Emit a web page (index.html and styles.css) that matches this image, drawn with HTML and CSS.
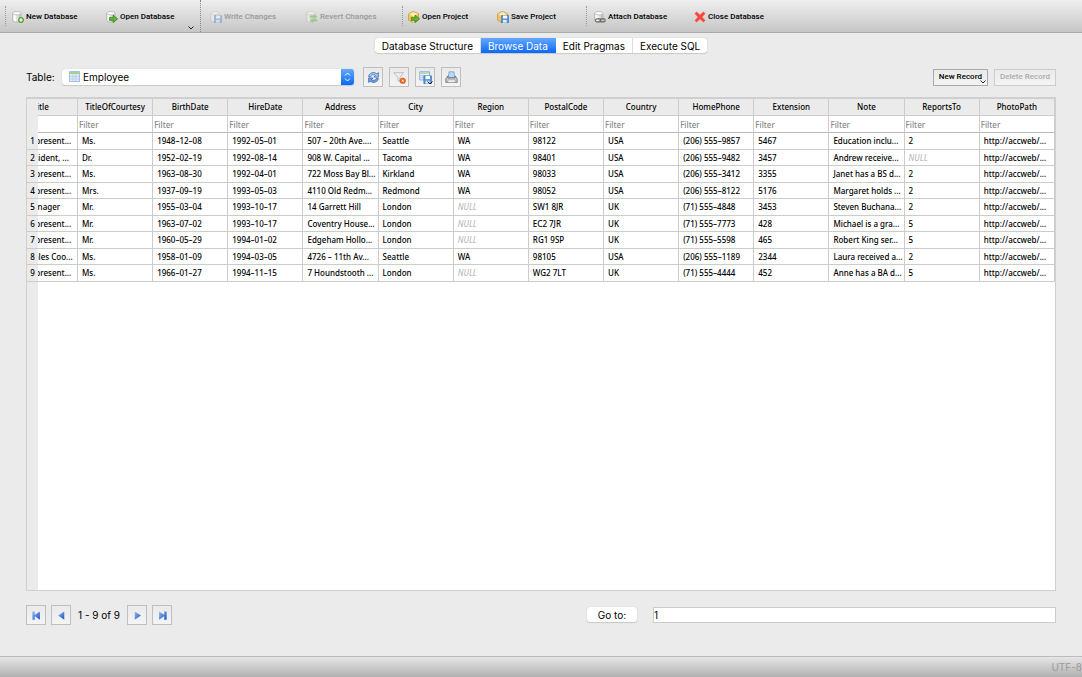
FILE: index.html
```html
<!doctype html>
<html lang="en">
  <head>
    <meta charset="utf-8">
    <title>Database Browser</title>
    <link rel="stylesheet" href="styles.css">
  </head>
  <body>
    <svg class="defs" aria-hidden="true">
      <defs>
        <linearGradient id="g-blue" x2="1" y2="1"><stop offset="0" stop-color="#8fc0f5"/><stop offset="1" stop-color="#1c50c4"/></linearGradient>
        <symbol id="cyl" viewBox="0 0 16 16">
          <path d="M1 3v9.500c0 3 11 3 11 0V3z" fill="#e2e4e0" stroke="#a2a49f" stroke-width=".9"/>
          <path d="M2 5v7.500c1 1 2 1.300 3 1.500V5z" fill="#fff"/>
          <path d="M9 5v8.800l2.500-1.300V4z" fill="#bcbeb8"/>
          <ellipse cx="6.500" cy="3" rx="5.500" ry="2.300" fill="#fcfcfc" stroke="#a2a49f" stroke-width=".8"/>
        </symbol>
        <symbol id="arrow" viewBox="0 0 16 16">
          <path d="M4.500 8.500h5V5.500l6 5-6 5v-3h-5z" fill="#5fb336" stroke="#2f7a16" stroke-width=".9"/>
        </symbol>
        <symbol id="disk" viewBox="0 0 16 16">
          <path d="M6 6h9.500v9.500H6z" fill="#5a93dc" stroke="#3268b4" stroke-width=".8"/>
          <path d="M8 6h5.500v4H8z" fill="#fff"/><path d="M8 12h5v3.500H8z" fill="#e4edf8"/>
        </symbol>
        <symbol id="cube" viewBox="0 0 16 16">
          <path d="M.5 4l6.500-3.500L14 3.500v8L7 15.500l-6.500-3.500z" fill="#f4c558" stroke="#bf8f22" stroke-width=".9"/>
          <path d="M1.500 4.300L7 7l6-3.200L7 1.300z" fill="#fdeebb"/><path d="M7 7v8" stroke="#fff1c4" stroke-width="1.200"/>
        </symbol>
      </defs>
    </svg>

    <header class="toolbar">
      <div class="group group-db grip">
        <button><svg viewBox="0 0 16 16"><use href="#cyl"/><circle cx="12" cy="12" r="3.500" fill="#6fb648" stroke="#3f8420" stroke-width=".8"/><path d="M12 9.800v4.400M9.800 12h4.400" stroke="#fff" stroke-width="1.500"/></svg>New Database</button>
        <button class="has-menu"><svg viewBox="0 0 16 16"><use href="#cyl"/><use href="#arrow"/></svg>Open Database<svg class="chevron" viewBox="0 0 6 4"><path d="M.5 .5L3 3 5.500 .5"/></svg></button>
      </div>
      <div class="group group-changes">
        <button disabled><svg viewBox="0 0 16 16"><use href="#cyl"/><use href="#disk"/></svg>Write Changes</button>
        <button disabled><svg viewBox="0 0 16 16"><use href="#cyl"/><path d="M5 6h6V4l4 3.500L11 11V9H5zM15 11H9V9.500L5 12.500 9 16v-2h6z" fill="#5fb336"/></svg>Revert Changes</button>
      </div>
      <div class="group group-project grip">
        <button><svg viewBox="0 0 16 16"><use href="#cube"/><use href="#arrow"/></svg>Open Project</button>
        <button><svg viewBox="0 0 16 16"><use href="#cube"/><use href="#disk"/></svg>Save Project</button>
      </div>
      <div class="group group-attach grip">
        <button><svg viewBox="0 0 16 16"><use href="#cyl"/><g fill="none" stroke="#666" stroke-width="1.400"><rect x="2" y="10.500" width="7" height="4" rx="2"/><rect x="8" y="10.500" width="7" height="4" rx="2"/></g></svg>Attach Database</button>
        <button><svg viewBox="0 0 16 16"><path d="M3.500 1L8 5l4.500-4L15 3.500 11 8l4 4.500-2.500 2.500L8 11l-4.500 4L1 12.500 5 8 1 3.500z" fill="#f4473f" stroke="#f98780" stroke-width=".7"/></svg>Close Database</button>
      </div>
    </header>

    <main>
      <nav class="tabs">
        <button>Database Structure</button>
        <button class="active">Browse Data</button>
        <button>Edit Pragmas</button>
        <button>Execute SQL</button>
      </nav>

      <div class="controls">
        <label for="table">Table:</label>
        <div class="picker">
          <svg class="picker-icon" viewBox="0 0 11 11"><path d="M.5 .5h10v10H.5z" fill="#dfebfa" stroke="#a3c0e6"/><path d="M1 1h9v2H1z" fill="#a9d18f"/><path d="M1 5.500h9M1 8h9M4 3v7M7 3v7" stroke="#b4cdec" stroke-width=".8"/></svg>
          <select id="table"><option>Employee</option></select>
          <svg class="picker-cap" viewBox="0 0 13 16"><path d="M4 6.500L6.500 4 9 6.500M4 9.500L6.500 12 9 9.500"/></svg>
        </div>
        <div class="icons">
          <button class="icon" aria-label="Refresh"><svg viewBox="0 0 16 16"><path d="M2 7c0-4 6-7 10-3.500L14 2v5.500H8.500L10.300 5.500C8 3.500 5 5 4.500 7z" fill="#a8caf0" stroke="#2f62ad" stroke-width=".9"/><path d="M14 9c0 4-6 7-10 3.500L2 14V8.500h5.500L5.700 10.500C8 12.500 11 11 11.500 9z" fill="#6f9fdc" stroke="#2f62ad" stroke-width=".9"/></svg></button>
          <button class="icon" aria-label="Clear filters"><svg viewBox="0 0 16 16"><path d="M1 2h12L8.500 8v5.500L6 12V8z" fill="#ececec" stroke="#aaa" stroke-width=".8"/><circle cx="12" cy="12" r="3.500" fill="#ef6a24" stroke="#c74a0c" stroke-width=".6"/><path d="M10.800 10.800l2.400 2.400m0-2.400l-2.400 2.400" stroke="#fff"/></svg></button>
          <button class="icon has-menu" aria-label="Save table"><svg viewBox="0 0 16 16"><path d="M1 1h12v10H1z" fill="#edf4fc" stroke="#6d9bd6"/><path d="M1.500 1.500h11v2h-11z" fill="#b6d59d"/><path d="M1.500 5.500h11M1.500 8h11M5 4v7" stroke="#9fc0e8" stroke-width=".9"/><use href="#disk"/></svg><svg class="chevron" viewBox="0 0 6 4"><path d="M.5 .5L3 3 5.500 .5"/></svg></button>
          <button class="icon" aria-label="Print"><svg viewBox="0 0 16 16"><path d="M4 8L5 1h6l1 7z" fill="#b9d8f7" stroke="#6796cc" stroke-width=".9"/><path d="M3.500 6L1 9.500V14h14V9.500L12.500 6v2.500h-9z" fill="#ccc" stroke="#666" stroke-width=".9"/><path d="M3.500 11h9v3h-9z" fill="#f7f7f7" stroke="#888" stroke-width=".6"/></svg></button>
        </div>
        <div class="record-buttons">
          <button class="has-menu">New Record<svg class="chevron" viewBox="0 0 6 4"><path d="M.5 .5L3 3 5.500 .5"/></svg></button>
          <button disabled>Delete Record</button>
        </div>
      </div>

      <div class="grid">
        <table>
          <colgroup><col class="col-num"><col class="col-cut"><col span="13"></colgroup>
          <thead></thead>
          <tbody></tbody>
        </table>
      </div>

      <div class="pager">
        <button class="icon" aria-label="First"><svg viewBox="0 0 16 16"><path d="M2 2h3.500v5L13 2v12L5.500 9v5H2z" fill="url(#g-blue)"/></svg></button>
        <button class="icon" aria-label="Previous"><svg viewBox="0 0 16 16"><path d="M12 2v12L3 8z" fill="url(#g-blue)"/></svg></button>
        <span class="range">1 - 9 of 9</span>
        <button class="icon" aria-label="Next"><svg viewBox="0 0 16 16"><path d="M4 2v12l9-6z" fill="url(#g-blue)"/></svg></button>
        <button class="icon" aria-label="Last"><svg viewBox="0 0 16 16"><path d="M14 2h-3.500v5L3 2v12l7.500-5v5H14z" fill="url(#g-blue)"/></svg></button>
        <div class="goto">
          <button>Go to:</button>
          <input type="text" value="1" aria-label="Go to record">
        </div>
      </div>
    </main>

    <footer class="statusbar">UTF-8</footer>

    <script>
      const columns = ['Title', 'TitleOfCourtesy', 'BirthDate', 'HireDate', 'Address', 'City', 'Region', 'PostalCode',
        'Country', 'HomePhone', 'Extension', 'Note', 'ReportsTo', 'PhotoPath'];
      const url = 'http://accweb/...';
      const rows = [
        ['Sales Represent...', 'Ms.', '1948-12-08', '1992-05-01', '507 - 20th Ave....', 'Seattle', 'WA', '98122', 'USA', '(206) 555-9857', '5467', 'Education inclu...', '2', url],
        ['Vice President, ...', 'Dr.', '1952-02-19', '1992-08-14', '908 W. Capital ...', 'Tacoma', 'WA', '98401', 'USA', '(206) 555-9482', '3457', 'Andrew receive...', null, url],
        ['Sales Represent...', 'Ms.', '1963-08-30', '1992-04-01', '722 Moss Bay Bl...', 'Kirkland', 'WA', '98033', 'USA', '(206) 555-3412', '3355', 'Janet has a BS d...', '2', url],
        ['Sales Represent...', 'Mrs.', '1937-09-19', '1993-05-03', '4110 Old Redm...', 'Redmond', 'WA', '98052', 'USA', '(206) 555-8122', '5176', 'Margaret holds ...', '2', url],
        ['Sales Manager', 'Mr.', '1955-03-04', '1993-10-17', '14 Garrett Hill', 'London', null, 'SW1 8JR', 'UK', '(71) 555-4848', '3453', 'Steven Buchana...', '2', url],
        ['Sales Represent...', 'Mr.', '1963-07-02', '1993-10-17', 'Coventry House...', 'London', null, 'EC2 7JR', 'UK', '(71) 555-7773', '428', 'Michael is a gra...', '5', url],
        ['Sales Represent...', 'Mr.', '1960-05-29', '1994-01-02', 'Edgeham Hollo...', 'London', null, 'RG1 9SP', 'UK', '(71) 555-5598', '465', 'Robert King ser...', '5', url],
        ['Inside Sales Coo...', 'Ms.', '1958-01-09', '1994-03-05', '4726 - 11th Av...', 'Seattle', 'WA', '98105', 'USA', '(206) 555-1189', '2344', 'Laura received a...', '2', url],
        ['Sales Represent...', 'Ms.', '1966-01-27', '1994-11-15', '7 Houndstooth ...', 'London', null, 'WG2 7LT', 'UK', '(71) 555-4444', '452', 'Anne has a BA d...', '5', url]
      ];

      const cell = (value) => {
        if (value === null) return '<td class="null">NULL</td>';
        return `<td><div>${value.replace(/(\d) ?- ?(?=\d)/g, (m) => m.replace('-', '\u2013'))}</div></td>`;
      };

      document.querySelector('thead').innerHTML =
        `<tr><th></th>${columns.map((c) => `<th scope="col"><div>${c}</div></th>`).join('')}</tr>` +
        `<tr class="filters"><th></th>${columns.map((c) => `<td><input placeholder="Filter" aria-label="Filter ${c}"></td>`).join('')}</tr>`;
      document.querySelector('tbody').innerHTML =
        rows.map((r, i) => `<tr><th scope="row">${i + 1}</th>${r.map(cell).join('')}</tr>`).join('');
    </script>
  </body>
</html>
```
FILE: styles.css
```css
* { box-sizing: border-box; }
body { margin: 0; min-height: 100vh; display: flex; flex-direction: column; background: #ebebeb; color: #000; font: 10px/12px Inter, "Liberation Sans", sans-serif; }
button, input, select { font: inherit; color: inherit; margin: 0; padding: 0; border: 0; border-radius: 0; outline: none; }
button { background: none; white-space: nowrap; }
svg { flex: none; display: block; }
.defs { position: absolute; width: 0; height: 0; }
.has-menu { position: relative; }
.chevron { position: absolute; right: 1px; bottom: 1px; width: 6px; height: 4px; fill: none; stroke: #222; }

.toolbar { display: flex; height: 33px; background: linear-gradient(#efefef, #c6c6c6); border-bottom: 1px solid #aaa; font: 500 8px/10px Roboto, sans-serif; }
.group { display: flex; position: relative; }
.group button { display: flex; align-items: center; gap: 2px; width: 94px; padding-top: 2px; }
.group button > svg:first-child { width: 12px; height: 12px; }
.group button:disabled { color: #999; }
.group button:disabled svg { opacity: 0.45; }
.group .chevron { right: 6px; bottom: 2px; }
.grip::before { content: ""; position: absolute; left: 0; top: 6px; height: 20px; border-left: 1px dotted #999; }
.group-db { margin-left: 5px; padding-left: 7px; }
.group-changes { padding-left: 9px; border-left: 1px dotted #888; }
.group-changes button { width: 96px; }
.group-project { padding-left: 6px; }
.group-project button { width: 89px; }
.group-attach { padding-left: 8px; }
.group-attach button { width: 100px; }

main { flex: 1; display: flex; flex-direction: column; padding: 5px 26px 31px; }

.tabs { display: flex; align-self: center; height: 15px; background: #fff; border-radius: 3px; box-shadow: 0 0 1px #aaa, 0 1px 1px #ccc; }
.tabs button { padding: 0 7px; border-right: 1px solid #ddd; }
.tabs button:last-child { border-right: 0; }
.tabs .active { background: linear-gradient(#66a9fb, #0a68fb); color: #fff; border-color: transparent; }

.controls { display: flex; align-items: center; margin-top: 14px; height: 20px; }
.controls label { width: 36px; }
.picker { position: relative; flex: 0 1 292px; height: 16px; }
.picker select { appearance: none; width: 100%; height: 16px; padding-left: 21px; background: #fff; border-radius: 3px; box-shadow: 0 0 1px #aaa, 0 1px 1px #ccc; }
.picker-icon { position: absolute; left: 7px; top: 2px; width: 11px; height: 11px; }
.picker-cap { position: absolute; right: 0; top: 0; width: 13px; height: 16px; background: linear-gradient(#66a9fb, #0a68fb); border-radius: 0 3px 3px 0; fill: none; stroke: #fff; pointer-events: none; }
.icons { display: flex; gap: 6px; margin-left: 9px; }
.icon { display: flex; align-items: center; justify-content: center; width: 20px; height: 20px; border: 1px solid #bfbfbf; background: linear-gradient(#eaeaea, #f4f4f4); }
.icon > svg:first-child { width: 13px; height: 13px; }
.record-buttons { display: flex; gap: 6px; margin-left: auto; font: 500 8px/10px Roboto, sans-serif; }
.record-buttons button { height: 17px; padding: 0 5px; border: 1px solid #aaa; background: linear-gradient(#eaeaea, #f4f4f4); }
.record-buttons button:disabled { color: #aaa; border-color: #ccc; }

/* record grid */
.grid { flex: 1; margin-top: 10px; border: 1px solid #cfcfcf; border-top-width: 2px; background: linear-gradient(90deg, #ebebeb 11px, #fff 11px); overflow: hidden; font: 500 8px/10px "Noto Sans", sans-serif; }
.grid table { width: 100%; table-layout: fixed; border-collapse: separate; border-spacing: 0; }
.col-num { width: 11px; }
.col-cut { width: 40px; }
.grid th, .grid td { height: 17px; padding: 0; border-right: 1px solid #ccc; border-bottom: 1px solid #ccc; overflow: hidden; white-space: nowrap; text-align: left; font-weight: inherit; }
.grid tbody tr:nth-child(even) > * { height: 16px; }
.grid td { padding-left: 4px; }
.grid thead th { background: #ebebeb; text-align: center; }
.grid thead th:first-child { border-bottom-color: transparent; border-right: 0; }
.grid tbody th { background: #ebebeb; text-align: center; border-right: 0; }
.grid .filters > * { padding: 0; height: 17px; border-bottom-color: #bbb; }
.grid .filters input { display: block; width: 100%; height: 15px; padding-left: 1px; background: #fff; }
.grid .filters input::placeholder { color: #888; opacity: 1; }
.grid td.null { color: #bbb; font-style: italic; }
/* first data column is scrolled partly under the row numbers */
.grid tr > :nth-child(2) > * { width: 75px; margin-left: -35px; }
.grid td:nth-child(2) { padding-left: 0; }
.grid td:nth-child(2) div { padding-left: 1px; }

.pager { display: flex; align-items: center; gap: 5px; margin-top: 14px; height: 20px; }
.pager .icon > svg { width: 11px; height: 11px; }
.range { padding: 0 2px; min-width: 46px; }
.goto { flex: 0 1 469px; display: flex; gap: 16px; margin-left: auto; }
.goto button { width: 50px; height: 15px; border-radius: 3px; background: #fff; box-shadow: 0 0 1px #aaa, 0 1px 1px #ccc; }
.goto input { flex: 1; min-width: 0; height: 16px; border: 1px solid #ccc; background: #fff; }

.statusbar { height: 21px; border-top: 1px solid #bbb; background: linear-gradient(#e6e6e6, #b0b0b0); color: #999; text-align: right; line-height: 21px; }
```
